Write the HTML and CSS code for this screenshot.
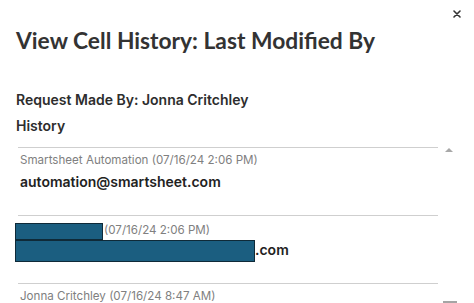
FILE: index.html
```html
<!DOCTYPE html>
<html lang="en">
<head>
    <meta charset="UTF-8">
    <meta name="viewport" content="width=device-width, initial-scale=1.0">
    <title>View Cell History</title>
    <link rel="stylesheet" href="styles.css">
</head>
<body>
    <div class="modal">
        <button class="close-button" aria-label="Close">
            <svg width="8" height="8" viewBox="0 0 8 8">
                <path d="M1 1 L7 7 M7 1 L1 7" stroke="#333" stroke-width="1.6" stroke-linecap="round"/>
            </svg>
        </button>

        <h1 class="modal-title">View Cell History: Last Modified By</h1>

        <div class="request-by">Request Made By: Jonna Critchley</div>
        <div class="section-label">History</div>

        <div class="history">
            <div class="history-list">
                <div class="entry">
                    <div class="entry-meta">Smartsheet Automation (07/16/24 2:06 PM)</div>
                    <div class="entry-value">automation@smartsheet.com</div>
                </div>
                <div class="entry entry-redacted">
                    <div class="entry-meta"><span class="redact redact-name"></span>(07/16/24 2:06 PM)</div>
                    <div class="entry-value"><span class="redact redact-email"></span>.com</div>
                </div>
                <div class="entry">
                    <div class="entry-meta">Jonna Critchley (07/16/24 8:47 AM)</div>
                    <div class="entry-value">jonna.critchley@example.com</div>
                </div>
            </div>
            <!-- custom scrollbar -->
            <div class="scrollbar">
                <span class="scroll-arrow"></span>
                <span class="scroll-thumb"></span>
            </div>
        </div>
    </div>
</body>
</html>
```

FILE: styles.css
```css
body {
    margin: 0;
    background: white;
    font-family: Inter, "Liberation Sans", sans-serif;
    color: #2d2d2d;
    overflow: hidden;
}

.modal {
    position: relative;
    height: 303px;
    padding: 26px 16px 0 16px;
    box-sizing: border-box;
    overflow: hidden;
}

.close-button {
    position: absolute;
    top: 9px;
    right: 12px;
    width: 10px;
    height: 10px;
    padding: 0;
    border: none;
    background: none;
    display: flex;
    align-items: center;
    justify-content: center;
    cursor: pointer;
}

.modal-title {
    font-family: Lato, sans-serif;
    font-weight: 700;
    font-size: 22.8px;
    line-height: 28px;
    margin: 0 0 36px 0;
    color: #333;
}

.request-by,
.section-label {
    font-size: 14px;
    font-weight: 600;
    line-height: 20px;
}

.request-by {
    margin-bottom: 6px;
}

.section-label {
    margin-bottom: 11px;
}

.history {
    display: flex;
    height: 160px;
}

.history-list {
    flex: 1;
    margin-left: 2px;
}

.entry {
    border-top: 1px solid #cfcfcf;
    padding: 4px 0 23px 2px;
}

.entry-redacted {
    padding-top: 6px;
    padding-bottom: 21px;
}

.entry-meta {
    font-size: 11.6px;
    line-height: 16px;
    height: 16px;
    color: #808080;
}

.entry-value {
    margin-top: 4px;
    font-size: 14px;
    font-weight: 600;
    line-height: 20px;
    color: #222;
}

.entry-redacted .entry-value {
    margin-top: 2px;
}

.redact {
    display: inline-block;
    margin-left: -5px;
    background: #1b5e80;
    border: 1px solid #0f2a38;
    box-sizing: border-box;
}

.redact-name {
    width: 88px;
    height: 17px;
    margin-right: 1px;
    vertical-align: -6px;
}

.redact-email {
    width: 240px;
    height: 22px;
    vertical-align: middle;
}

.scrollbar {
    width: 20px;
    display: flex;
    flex-direction: column;
    align-items: center;
}

.scroll-arrow {
    margin-top: 1px;
    margin-left: 2px;
    width: 0;
    height: 0;
    border-left: 4px solid transparent;
    border-right: 4px solid transparent;
    border-bottom: 4px solid #a8a8a8;
}

.scroll-thumb {
    margin-top: auto;
    margin-left: 4px;
    width: 14px;
    height: 6px;
    background: #a5a5a5;
}
```
